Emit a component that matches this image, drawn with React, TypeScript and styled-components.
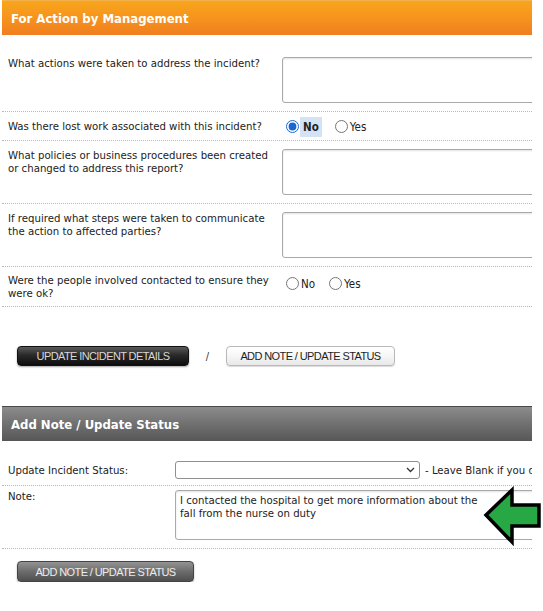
import React from "react";
import styled, { createGlobalStyle } from "styled-components";

const GlobalStyle = createGlobalStyle`
  html, body {
    margin: 0;
    padding: 0;
    background: #ffffff;
  }
  body {
    font-family: "DejaVu Sans Condensed", "Liberation Sans", sans-serif;
    font-size: 11.3px;
    color: #222;
  }
`;

const Page = styled.div`
  position: relative;
  width: 543px;
  height: 611px;
  overflow: hidden;
`;

const Panel = styled.div`
  width: 530px;
  margin-left: 2px;
  overflow: hidden;
`;

const SectionHeader = styled.div<{ $tone: "orange" | "gray" }>`
  height: 35px;
  display: flex;
  align-items: center;
  padding-left: 9px;
  font-weight: bold;
  font-size: 13px;
  color: #fff;
  background: ${(p) =>
    p.$tone === "orange"
      ? "linear-gradient(to bottom, #f9a51c 0%, #f6931e 50%, #f07e20 100%)"
      : "linear-gradient(to bottom, #8c8c8c 0%, #707070 50%, #575757 100%)"};
  border-top: 1px solid ${(p) => (p.$tone === "orange" ? "#f4b04a" : "#4a4a4a")};
  box-sizing: border-box;
`;

const Table = styled.div<{ $top: number }>`
  margin-top: ${(p) => p.$top}px;
`;

const Row = styled.div<{ $labelWidth: number; $pad?: string }>`
  display: grid;
  grid-template-columns: ${(p) => p.$labelWidth}px 1fr;
  align-items: start;
  padding: ${(p) => p.$pad ?? "8px 0"};
  padding-left: 6px;
  border-bottom: 1px dotted #b8b8b8;
  box-sizing: border-box;
`;

const Label = styled.div<{ $center?: boolean }>`
  line-height: 13px;
  padding-right: 6px;
  align-self: ${(p) => (p.$center ? "center" : "start")};
`;

const TextArea = styled.textarea`
  display: block;
  width: 262px;
  height: 46px;
  box-sizing: border-box;
  border: 1px solid #a9a9a9;
  border-radius: 3px;
  box-shadow: inset 0 1px 2px rgba(0, 0, 0, 0.12);
  resize: none;
  font-family: inherit;
  font-size: 11.3px;
  line-height: 13px;
  color: #222;
  padding: 3px 4px;
  background: #fff;
  white-space: pre-wrap;
`;

const WideTextArea = styled(TextArea)`
  width: 370px;
  height: 50px;
`;

const RadioGroup = styled.div`
  display: flex;
  align-items: center;
  gap: 9px;
  height: 19px;
`;

const RadioOption = styled.label<{ $focused?: boolean }>`
  display: flex;
  align-items: center;
  input {
    margin: 0 1px 0 4px;
    width: 13px;
    height: 13px;
    accent-color: #1a66d2;
  }
  span {
    padding: ${(p) => (p.$focused ? "3px 3px" : "3px 1px")};
    font-size: 11.5px;
    background: ${(p) => (p.$focused ? "#d4e3f4" : "transparent")};
    font-weight: ${(p) => (p.$focused ? "bold" : "normal")};
  }
`;

const ButtonBar = styled.div`
  display: flex;
  align-items: center;
  padding: 39px 0 0 15px;
  height: 20px;
`;

const Slash = styled.span`
  width: 37px;
  text-align: center;
  color: #333;
  font-size: 11px;
`;

const Button = styled.button<{ $variant: "dark" | "light" | "gray"; $width: number; $height?: number }>`
  width: ${(p) => p.$width}px;
  height: ${(p) => p.$height ?? 20}px;
  box-sizing: border-box;
  border-radius: 4px;
  font-family: "Liberation Sans", Arial, sans-serif;
  font-size: 11px;
  letter-spacing: -0.6px;
  padding: 0;
  cursor: pointer;
  ${(p) =>
    p.$variant === "dark"
      ? `
    color: #d8d8d8;
    border: 1px solid #111;
    background: linear-gradient(to bottom, #5a5a5a 0%, #2a2a2a 45%, #0d0d0d 100%);
    box-shadow: 0 1px 2px rgba(0,0,0,0.35);
  `
      : p.$variant === "light"
      ? `
    color: #1e1e1e;
    border: 1px solid #b9b9b9;
    background: linear-gradient(to bottom, #ffffff 0%, #f6f6f6 50%, #e8e8e8 100%);
    box-shadow: 0 1px 1px rgba(0,0,0,0.15);
  `
      : `
    color: #ececec;
    border: 1px solid #444;
    background: linear-gradient(to bottom, #939393 0%, #6c6c6c 50%, #4f4f4f 100%);
    box-shadow: 0 1px 2px rgba(0,0,0,0.3);
  `}
`;

const SelectLine = styled.div`
  display: flex;
  align-items: center;
  gap: 5px;
  white-space: nowrap;
`;

const SelectBox = styled.div`
  position: relative;
  width: 245px;
  height: 18px;
  box-sizing: border-box;
  border: 1px solid #8f8f8f;
  border-radius: 3px;
  background: #fff;
  flex-shrink: 0;
  svg {
    position: absolute;
    right: 4px;
    top: 5px;
  }
`;

const Gap = styled.div<{ $h: number }>`
  height: ${(p) => p.$h}px;
`;

const BottomBar = styled.div`
  padding: 12px 0 0 15px;
`;

const Arrow = styled.svg`
  position: absolute;
  left: 482px;
  top: 486px;
`;

const Radio: React.FC<{ name: string; label: string; checked?: boolean }> = ({
  name,
  label,
  checked,
}) => (
  <RadioOption $focused={checked}>
    <input type="radio" name={name} defaultChecked={checked} />
    <span>{label}</span>
  </RadioOption>
);

export default function App() {
  return (
    <Page>
      <GlobalStyle />
      <Panel>
        <SectionHeader $tone="orange">For Action by Management</SectionHeader>
        <Table $top={14}>
          <Row $labelWidth={274}>
            <Label>What actions were taken to address the incident?</Label>
            <TextArea />
          </Row>
          <Row $labelWidth={274} $pad="5px 0 4px">
            <Label $center>Was there lost work associated with this incident?</Label>
            <RadioGroup>
              <Radio name="lost" label="No" checked />
              <Radio name="lost" label="Yes" />
            </RadioGroup>
          </Row>
          <Row $labelWidth={274}>
            <Label>
              What policies or business procedures been created or changed to
              address this report?
            </Label>
            <TextArea />
          </Row>
          <Row $labelWidth={274}>
            <Label>
              If required what steps were taken to communicate the action to
              affected parties?
            </Label>
            <TextArea />
          </Row>
          <Row $labelWidth={274} $pad="7px 0 6px">
            <Label>Were the people involved contacted to ensure they were ok?</Label>
            <RadioGroup>
              <Radio name="contacted" label="No" />
              <Radio name="contacted" label="Yes" />
            </RadioGroup>
          </Row>
        </Table>

        <ButtonBar>
          <Button $variant="dark" $width={172}>UPDATE INCIDENT DETAILS</Button>
          <Slash>/</Slash>
          <Button $variant="light" $width={169}>ADD NOTE / UPDATE STATUS</Button>
        </ButtonBar>

        <Gap $h={40} />
        <SectionHeader $tone="gray">Add Note / Update Status</SectionHeader>
        <Table $top={12}>
          <Row $labelWidth={167} $pad="8px 0 6px">
            <Label $center>Update Incident Status:</Label>
            <SelectLine>
              <SelectBox>
                <svg width="9" height="6" viewBox="0 0 9 6">
                  <path d="M1 1 L4.5 4.5 L8 1" fill="none" stroke="#333" strokeWidth="1.3" />
                </svg>
              </SelectBox>
              <span>- Leave Blank if you do not wish to change the status</span>
            </SelectLine>
          </Row>
          <Row $labelWidth={167} $pad="4px 0 8px">
            <Label>Note:</Label>
            <WideTextArea
              defaultValue={
                "I contacted the hospital to get more information about the\nfall from the nurse on duty"
              }
            />
          </Row>
        </Table>
        <BottomBar>
          <Button $variant="gray" $width={177} $height={21}>ADD NOTE / UPDATE STATUS</Button>
        </BottomBar>
      </Panel>

      <Arrow width="61" height="60" viewBox="0 0 61 60">
        <path
          d="M4 29 L30 4 L30 19 L57 19 L57 40 L30 40 L30 56 Z"
          fill="#27a844"
          stroke="#000"
          strokeWidth="3.5"
          strokeLinejoin="miter"
        />
      </Arrow>
    </Page>
  );
}
